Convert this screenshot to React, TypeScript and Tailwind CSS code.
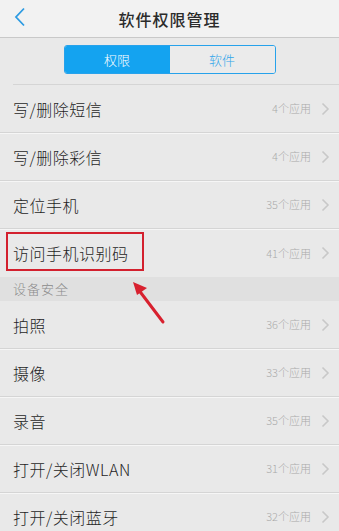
import React from "react";

const font = { fontFamily: '"Noto Sans CJK SC", "Noto Sans", sans-serif' };

function Chevron() {
  return (
    <svg width="9" height="14" viewBox="0 0 9 14" className="ml-[10px]">
      <path d="M1.5 1.5 L7 7 L1.5 12.5" fill="none" stroke="#c8c8c8" strokeWidth="1.6" />
    </svg>
  );
}

function Row({ label, count, boxed }: { label: string; count: string; boxed?: boolean }) {
  return (
    <div className={"relative h-[48px] flex items-center pl-[13px] pr-[9px] " + (boxed ? "" : "border-b border-[#d5d5d5] shadow-[0_1px_0_#f6f6f6]")}>
      <span className="text-[16px] font-light text-[#1f1f1f] leading-none tracking-[0.5px]">{label}</span>
      <span className="ml-auto text-[11px] font-light text-[#a9a9a9] leading-none">{count}</span>
      <Chevron />
      {boxed && (
        <div className="absolute left-[6px] top-[3px] w-[138px] h-[39px] border-2 border-[#d3202e]" />
      )}
    </div>
  );
}

export default function App() {
  const rows1 = [
    ["写/删除短信", "4个应用"],
    ["写/删除彩信", "4个应用"],
    ["定位手机", "35个应用"],
  ];
  const rows2 = [
    ["拍照", "36个应用"],
    ["摄像", "33个应用"],
    ["录音", "35个应用"],
    ["打开/关闭WLAN", "31个应用"],
    ["打开/关闭蓝牙", "32个应用"],
  ];
  return (
    <div style={font} className="relative w-[339px] h-[531px] overflow-hidden bg-[#e9e9e9]">
      <div className="relative h-[38px] bg-[#f2f2f2] border-b border-[#c9c9c9] flex items-center justify-center">
        <svg width="12" height="20" viewBox="0 0 12 20" className="absolute left-[14px] top-[7px]">
          <path d="M10 1.5 L2 10 L10 18.5" fill="none" stroke="#2d9be2" strokeWidth="1.8" />
        </svg>
        <span className="text-[16px] text-[#2b2b2b] font-medium tracking-[1px]">软件权限管理</span>
      </div>
      <div className="h-[47px] flex justify-center pt-[7px] border-b border-[#d5d5d5] ml-[13px]">
        <div className="-ml-[13px] w-[212px] h-[29px] flex border border-[#27a2eb] rounded-[3px] overflow-hidden">
          <div className="w-1/2 bg-[#14a3f0] flex items-center justify-center text-white text-[13px] font-light">权限</div>
          <div className="w-1/2 bg-[#ebebeb] flex items-center justify-center text-[#32a6ea] text-[13px] font-light">软件</div>
        </div>
      </div>
      {rows1.map(([l, c]) => (
        <Row key={l} label={l} count={c} />
      ))}
      <Row label="访问手机识别码" count="41个应用" boxed />
      <div className="h-[24px] bg-[#e0e0e0] flex items-center pl-[13px] text-[13px] font-light text-[#8a8a8a] tracking-[1px]">设备安全</div>
      {rows2.map(([l, c]) => (
        <Row key={l} label={l} count={c} />
      ))}
      <svg width="40" height="50" viewBox="0 0 40 50" className="absolute left-[128px] top-[278px]">
        <path d="M35 44 L10 11" stroke="#d8212f" strokeWidth="3" strokeLinecap="round" />
        <path d="M5 4 L19 10 L9 17 Z" fill="#d8212f" />
      </svg>
    </div>
  );
}
